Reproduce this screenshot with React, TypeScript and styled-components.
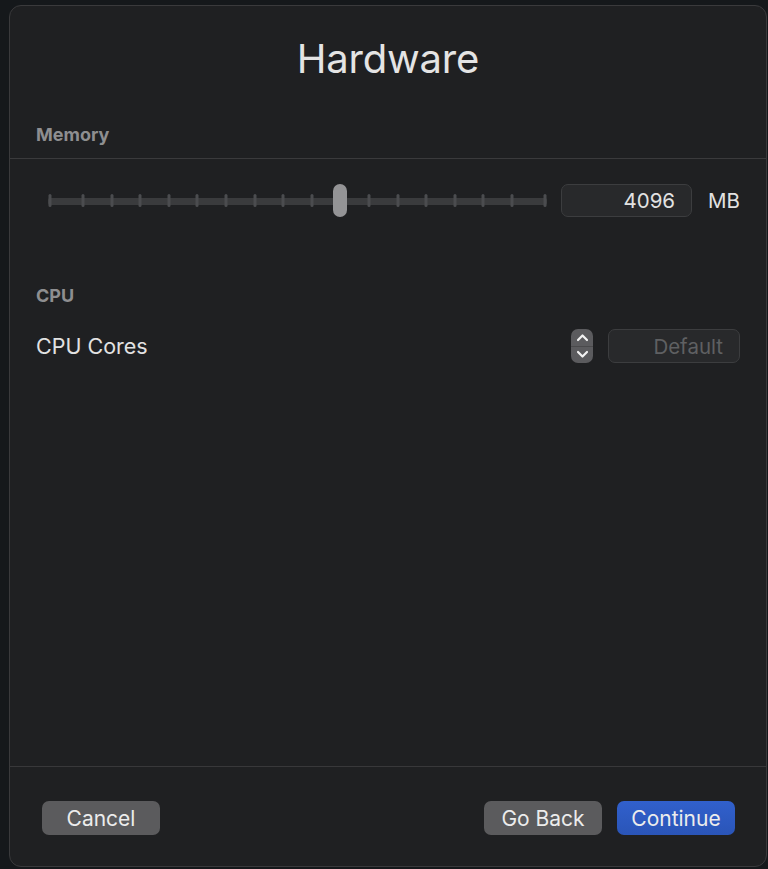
import React from "react";
import styled, { createGlobalStyle } from "styled-components";

const Global = createGlobalStyle`
  html, body { margin: 0; padding: 0; background: #15181b; }
  body { font-family: Inter, "Noto Sans", sans-serif; -webkit-font-smoothing: antialiased; }
`;

const Page = styled.div`
  width: 768px;
  height: 869px;
  box-sizing: border-box;
  padding: 5px 1px 2px 9px;
  display: flex;
`;

const Window = styled.div`
  flex: 1;
  display: flex;
  flex-direction: column;
  background: #1f2022;
  border: 1px solid #3a3a3c;
  border-radius: 12px;
  box-sizing: border-box;
  overflow: hidden;
`;

const Header = styled.div`
  display: flex;
  flex-direction: column;
  padding: 28px 26px 13px 26px;
  border-bottom: 1px solid #3a3a3c;
`;

const Title = styled.h1`
  margin: 0 0 41px 0;
  text-align: center;
  font-size: 40px;
  line-height: 50px;
  font-weight: 400;
  color: #e4e4e4;
  letter-spacing: -0.2px;
`;

const SectionLabel = styled.div<{ $gapTop?: number }>`
  font-size: 18px;
  line-height: 20px;
  font-weight: 700;
  color: #8e8e90;
  margin-top: ${(p) => p.$gapTop ?? 0}px;
`;

const Body = styled.div`
  flex: 1;
  display: flex;
  flex-direction: column;
  padding: 25px 26px 0 26px;
`;

const SliderRow = styled.div`
  display: flex;
  align-items: center;
  height: 33px;
  padding-left: 12px;
`;

const SliderTrack = styled.div`
  position: relative;
  width: 499px;
  height: 33px;
  flex-shrink: 0;
  &::before {
    content: "";
    position: absolute;
    left: 0;
    right: 0;
    top: 14px;
    height: 7px;
    border-radius: 2px;
    background: #3a3b3d;
  }
`;

const Tick = styled.div`
  position: absolute;
  top: 10px;
  width: 3px;
  height: 13px;
  border-radius: 1.5px;
  background: #4b4c4f;
  transform: translateX(-1.5px);
`;

const Thumb = styled.div`
  position: absolute;
  top: 0;
  width: 14px;
  height: 33px;
  border-radius: 7px;
  background: #949496;
  transform: translateX(-7px);
`;

const NumberField = styled.div<{ $muted?: boolean; $w: number; $h: number }>`
  box-sizing: border-box;
  width: ${(p) => p.$w}px;
  height: ${(p) => p.$h}px;
  border: 1px solid #3c3d3f;
  border-radius: 7px;
  background: #28292b;
  display: flex;
  align-items: center;
  justify-content: flex-end;
  padding-right: 16px;
  font-size: 20.5px;
  color: ${(p) => (p.$muted ? "#5f6062" : "#e2e2e2")};
`;

const Unit = styled.div`
  font-size: 20.5px;
  color: #e2e2e2;
  margin-left: 16px;
`;

const Row = styled.div`
  display: flex;
  align-items: center;
  height: 34px;
  margin-top: 23px;
`;

const RowLabel = styled.div`
  flex: 1;
  font-size: 21.5px;
  color: #e2e2e2;
`;

const Stepper = styled.div`
  width: 22px;
  height: 34px;
  border-radius: 7px;
  background: #5b5b5e;
  display: flex;
  flex-direction: column;
  margin-right: 15px;
  overflow: hidden;
`;

const StepHalf = styled.div<{ $top?: boolean }>`
  flex: 1;
  display: flex;
  align-items: center;
  justify-content: center;
  border-bottom: ${(p) => (p.$top ? "1px solid #4a4a4c" : "none")};
`;

const Footer = styled.div`
  border-top: 1px solid #38383a;
  padding: 34px 31px 31px 32px;
  display: flex;
  align-items: center;
`;

const Button = styled.button<{ $primary?: boolean }>`
  width: 118px;
  height: 34px;
  border: none;
  border-radius: 7px;
  font-family: Inter, "Noto Sans", sans-serif;
  font-size: 21px;
  color: #ececec;
  padding: 0;
  background: ${(p) => (p.$primary ? "linear-gradient(#3160cc, #2a55b8)" : "#5b5b5d")};
`;

const Spacer = styled.div`
  flex: 1;
`;

const ButtonGap = styled.div`
  width: 15px;
`;

const Chevron = ({ up }: { up?: boolean }) => (
  <svg width="13" height="9" viewBox="0 0 13 9">
    <path
      d={up ? "M2 7 L6.5 2.5 L11 7" : "M2 2 L6.5 6.5 L11 2"}
      fill="none"
      stroke="#f2f2f2"
      strokeWidth="2.2"
      strokeLinecap="round"
      strokeLinejoin="round"
    />
  </svg>
);

const tickPositions: number[] = (() => {
  const arr: number[] = [2];
  for (let i = 0; i < 16; i++) arr.push(35 + (429 / 15) * i);
  arr.push(497);
  return arr;
})();

export default function App() {
  const thumbPos = 35 + (429 / 15) * 9;
  return (
    <>
      <Global />
      <Page>
        <Window>
          <Header>
            <Title>Hardware</Title>
            <SectionLabel>Memory</SectionLabel>
          </Header>
          <Body>
            <SliderRow>
              <SliderTrack>
                {tickPositions.map((x, i) => (
                  <Tick key={i} style={{ left: x }} />
                ))}
                <Thumb style={{ left: thumbPos }} />
              </SliderTrack>
              <Spacer />
              <NumberField $w={131} $h={33}>4096</NumberField>
              <Unit>MB</Unit>
            </SliderRow>
            <SectionLabel $gapTop={69}>CPU</SectionLabel>
            <Row>
              <RowLabel>CPU Cores</RowLabel>
              <Stepper>
                <StepHalf $top>
                  <Chevron up />
                </StepHalf>
                <StepHalf>
                  <Chevron />
                </StepHalf>
              </Stepper>
              <NumberField $muted $w={132} $h={34}>Default</NumberField>
            </Row>
          </Body>
          <Footer>
            <Button>Cancel</Button>
            <Spacer />
            <Button>Go Back</Button>
            <ButtonGap />
            <Button $primary>Continue</Button>
          </Footer>
        </Window>
      </Page>
    </>
  );
}
